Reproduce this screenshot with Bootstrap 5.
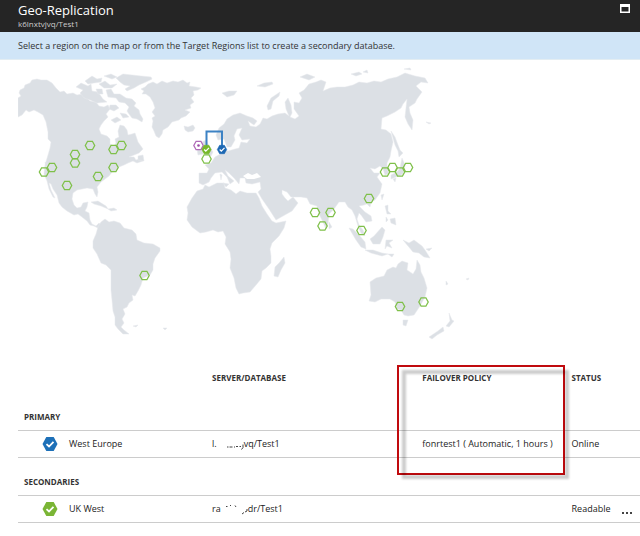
<!DOCTYPE html>
<html lang="en">
<head>
<meta charset="utf-8">
<meta name="viewport" content="width=device-width, initial-scale=1">
<title>Geo-Replication</title>
<link href="https://cdn.jsdelivr.net/npm/bootstrap@5.3.0/dist/css/bootstrap.min.css" rel="stylesheet">
<style>
  body { font-family: "Open Sans", "Noto Sans", sans-serif; font-size: 9px; line-height: 16px; color: #222; background: #fff; }
  .blade-head { background: #252525; color: #fff; height: 32px; padding: 2px 9px 0 18px; }
  .blade-head h1 { font-size: 13px; line-height: 16px; }
  .blade-head p { font-size: 8px; line-height: 12px; color: #ccc; }
  .window-btn { width: 12px; height: 12px; line-height: 0; }
  .hint { background: #d0e5f7; color: #333; height: 28px; padding-left: 18px; border-bottom: 1px solid #e3edf2; }
  .map-area { padding: 0 0 0 18px; }
  .map-area svg { width: 460px; max-width: 100%; height: auto; }
  .land { fill: #dce0e5; stroke: #e6e9ed; stroke-width: .5; stroke-linejoin: round; }
  .open-region { fill: none; stroke: #7fc04a; stroke-width: 1.3; }
  .regions { margin: 19px 0 0 18px; }
  .regions table { table-layout: fixed; color: inherit; }
  .regions th, .regions td { padding: 0; font-weight: 400; vertical-align: middle; white-space: nowrap; }
  .regions thead th, .regions .group-row th { font-size: 8px; font-weight: 700; color: #333; }
  .regions thead > tr > * { height: 25px; }
  .regions .group-row th { height: 40px; padding: 0 0 5px 6px; vertical-align: bottom; }
  .regions .group-row.later th { height: 38px; }
  .regions .region-row > * { height: 27px; border-top: 1px solid #ccc; border-bottom: 1px solid #ccc; }
  .region-name { padding-left: 24px; gap: 11px; }
  .policy-frame { left: 61%; top: 0; width: 27%; height: 110px; border: 2px solid #c00a0e; pointer-events: none; }
  .policy-frame::after { content: ""; position: absolute; inset: 3px -6px -6px 3px; border: 4px solid rgba(0,0,0,.2); filter: blur(1px); }
  .more-btn { line-height: 0; }
</style>
<script src="https://cdn.jsdelivr.net/npm/bootstrap@5.3.0/dist/js/bootstrap.bundle.min.js"></script>
</head>
<body>
<header class="blade-head d-flex justify-content-between align-items-start">
  <div>
    <h1 class="m-0 fw-normal">Geo-Replication</h1>
    <p class="m-0">k6lnxtvjvq/Test1</p>
  </div>
  <button type="button" class="window-btn btn p-0 border-0 rounded-0" aria-label="Maximize">
    <svg width="12" height="12" viewBox="0 0 12 12"><path d="M1 2h10v9H1z" fill="#fff"/><path d="M2.500 5h7v4.500h-7z" fill="#222"/></svg>
  </button>
</header>
<div class="hint d-flex align-items-center">Select a region on the map or from the Target Regions list to create a secondary database.</div>

<main>
  <section class="map-area">
    <svg class="d-block" viewBox="18 60 460 286" role="img" aria-label="World map of regions">
      <defs>
        <path id="hex" d="M-4.700 0L-2.400-4.200H2.400L4.700 0L2.400 4.200H-2.400Z"/>
        <g id="tick"><path d="M-2.300 0L-.7 1.600L2.500-1.600" fill="none" stroke="#fff" stroke-width="1.300"/></g>
      </defs>
      <g class="land">
        <path d="M18 98L21 96L19 93L20 90L24 88L25 85L30 83L32 80L37 79L41 80L47 80L52 83L56 88L60 92L64 91L67 94L73 93L77 95L82 94L87 98L90 101L96 102L99 106L104 107L108 105L110 109L106 114L108 117L104 121L101 125L99 129L101 134L107 136L110 139L110 144L114 146L116 143L115 139L119 137L118 131L120 125L124 126L127 130L128 135L132 134L135 133L138 142L143 149L139 153L134 155L129 157L134 157L136 160L142 158L143 161L137 163L133 161L128 163L124 165L119 167L116 171L112 172L109 176L105 179L101 182L97 187L98 192L97 197L95 194L93 189L87 188L82 189L77 190L73 193L72 199L74 205L77 208L81 207L83 203L88 202L87 207L85 211L89 213L90 220L92 224L96 226L99 223L101 225L98 228L94 226L90 225L87 221L82 217L78 214L74 215L67 211L62 207L59 203L57 195L53 189L51 184L49 183L51 190L55 198L53 197L49 189L47 181L44 174L45 165L48 155L50 148L51 142L48 139L48 132L46 122L43 115L38 112L34 110L29 112L26 110L22 115L18 117Z"/>
        <path d="M76 87L81 83L88 86L91 84L92 91L98 92L103 99L107 102L97 103L90 100L84 98L80 93L83 90Z"/>
        <path d="M85 81L92 76L97 79L102 78L101 82L94 83L88 84ZM99 84L105 81L110 85L117 84L112 88L104 88ZM96 89L102 89L103 94L98 94ZM106 90L111 89L114 94L120 94L126 98L132 99L136 103L134 106L139 110L140 114L143 119L142 122L137 119L132 118L129 114L127 111L129 107L125 103L119 102L116 98L108 97ZM116 78L123 74L132 75L141 76L151 77L152 79L146 82L139 85L134 88L127 91L125 89L130 86L124 85L120 82ZM104 76L111 74L117 77L112 79ZM110 105L116 105L119 108L114 111L109 109ZM111 120L117 117L121 120L115 123ZM120 113L126 114L129 117L123 118Z"/>
        <path d="M141 89L145 87L148 84L153 82L157 84L162 81L167 83L173 81L178 82L183 80L187 83L190 82L189 86L196 87L201 88L198 90L193 91L194 95L191 98L194 102L190 105L191 108L185 110L190 112L186 116L181 118L179 120L172 122L168 127L163 130L162 134L159 138L156 136L154 131L152 127L153 121L152 118L155 116L152 112L155 108L153 102L150 97L146 94L142 94L144 91Z"/>
        <path d="M184 126L188 127L193 125L195 128L193 131L188 132L185 130Z"/>
        <path d="M91 202L98 201L106 206L108 209L101 206L94 204ZM108 209L114 208L117 210L111 211ZM138 156L143 155L144 161L138 160ZM45 162L48 164L46 167Z"/>
        <path d="M98 227L101 222L105 219L109 222L114 221L120 223L124 228L132 230L136 234L137 240L144 243L153 244L160 248L160 251L155 258L153 264L153 270L150 275L143 278L141 285L138 291L135 296L132 295L133 300L129 303L127 307L123 309L125 314L122 319L124 323L121 327L124 330L129 334L123 334L118 329L115 325L115 317L113 311L112 300L111 290L111 270L106 265L101 263L97 254L93 248L93 241L96 234Z"/>
        <path d="M133 326L138 325L136 327ZM163 328L167 328L165 330Z"/>
        <path d="M205 185L209 187L217 183L224 183L225 188L231 190L236 194L240 191L247 193L256 193L259 198L262 206L267 214L272 221L276 223L286 221L284 228L279 236L272 243L270 249L271 256L271 263L266 268L262 271L261 279L256 285L250 292L243 293L239 294L236 288L234 278L230 268L231 259L230 252L225 244L226 237L223 231L218 232L213 230L206 232L200 233L192 227L187 220L188 213L187 207L192 198L197 191L203 189Z"/>
        <path d="M284 257L285 263L281 270L278 277L274 276L275 267L279 263Z"/>
        <path d="M199 173L207 173L209 169L205 165L211 163L215 157L222 153L224 149L228 151L235 149L239 148L241 142L247 143L250 139L242 140L239 135L242 128L237 129L234 136L235 140L231 147L227 147L224 139L218 140L216 135L219 128L224 124L227 119L233 115L240 113L247 116L253 118L257 121L254 125L248 121L250 126L256 127L260 124L263 118L267 119L272 116L278 114L285 113L289 116L286 109L285 102L288 98L291 105L292 113L290 117L295 119L299 116L294 109L294 102L299 103L302 98L299 93L304 90L309 84L316 82L321 80L326 82L323 91L330 88L337 87L345 87L353 85L359 82L367 83L374 81L381 82L388 79L397 77L405 73L415 76L425 78L428 83L421 82L416 86L422 92L417 99L415 103L409 107L410 113L413 120L412 130L408 124L405 117L406 108L407 99L403 104L401 108L395 112L387 116L382 118L381 129L386 130L391 134L393 142L391 151L390 157L387 163L387 168L389 174L385 175L383 169L380 166L375 169L370 168L374 173L380 173L377 177L382 184L380 193L375 200L369 203L364 205L359 206L365 212L371 216L372 221L366 222L361 215L359 213L357 219L359 225L363 230L365 236L361 233L358 226L355 216L352 210L348 207L345 202L339 202L334 209L329 214L328 224L326 229L322 220L319 214L317 206L310 204L307 198L301 197L291 197L287 192L282 190L282 194L285 198L288 201L293 197L298 203L292 211L283 216L276 220L269 209L262 199L258 192L261 189L260 182L252 184L246 183L245 178L240 178L239 184L234 178L229 173L225 170L228 176L234 181L230 184L227 177L222 172L215 173L211 178L209 182L203 185L199 183Z"/>
      </g>
      <path d="M243 176L248 173L252 175L257 173L261 177L254 179L247 179Z" fill="#fff"/>
      <g class="land">
        <path d="M220 174L222 175L221 180ZM223 183L229 184L226 187Z"/>
        <path d="M202 142L206 140L209 146L213 152L211 156L205 156L206 151ZM197 149L203 148L203 154L198 155Z"/>
        <path d="M222 93L229 91L237 91L234 95L227 97ZM257 86L264 83L272 82L273 84L265 87ZM267 106L271 98L280 92L279 96L273 101L271 109L268 110ZM300 77L307 74L315 77L309 80ZM351 74L359 72L362 74L356 76ZM363 72L367 70L368 73ZM404 69L410 68L411 70ZM426 122L431 123L429 124Z"/>
        <path d="M391 131L395 137L398 145L400 150L403 153L399 157L398 151L395 145ZM402 158L405 165L403 174L396 177L391 179L391 175L397 172L400 168ZM393 179L396 178L395 182Z"/>
        <path d="M381 195L384 194L382 200ZM367 204L371 203L370 207ZM385 206L388 205L388 211L391 214L387 214ZM390 219L395 218L396 225L391 223ZM386 217L388 220L386 222Z"/>
        <path d="M349 228L353 229L359 235L365 242L366 249L361 247L356 240ZM365 250L373 250L382 253L388 254L382 256L371 253ZM382 227L385 230L383 237L380 244L373 244L370 239L374 236ZM386 240L393 240L389 243L392 248L387 246L385 249ZM403 240L409 243L414 240L422 246L425 250L430 258L424 257L419 253L413 252L408 246ZM388 254L394 254L392 257ZM426 249L432 248L429 251ZM329 222L332 227L329 229Z"/>
        <path d="M370 282L376 278L384 276L387 270L393 267L396 268L398 264L402 261L408 263L407 270L413 274L416 269L417 260L420 265L421 272L424 278L427 288L425 297L420 306L414 315L408 316L404 315L401 310L397 309L395 302L390 299L381 299L375 302L369 301L371 295Z"/>
        <path d="M403 320L408 320L406 326L403 325ZM449 313L452 320L454 321L449 327L446 326L450 321ZM443 327L444 331L437 335L432 339L429 337L438 331ZM446 281L448 284L446 285ZM466 279L469 278L468 280Z"/>
      </g>
      <g class="open-region">
        <use href="#hex" x="90" y="145.500"/><use href="#hex" x="75" y="154.500"/><use href="#hex" x="75" y="163"/>
        <use href="#hex" x="52" y="167.500"/><use href="#hex" x="44" y="172"/><use href="#hex" x="67" y="185.500"/>
        <use href="#hex" x="98" y="176.500"/><use href="#hex" x="113.500" y="167.500"/><use href="#hex" x="113.500" y="149.500"/>
        <use href="#hex" x="121.500" y="145.500"/><use href="#hex" x="144.500" y="275.500"/><use href="#hex" x="206.500" y="159" fill="#fff"/>
        <use href="#hex" x="385" y="172"/><use href="#hex" x="392.500" y="167.500"/><use href="#hex" x="400" y="172"/>
        <use href="#hex" x="408" y="167.500"/><use href="#hex" x="369" y="198.500"/><use href="#hex" x="361.500" y="230.500"/>
        <use href="#hex" x="315" y="212.500"/><use href="#hex" x="330.500" y="212.500"/><use href="#hex" x="322.500" y="226"/>
        <use href="#hex" x="400" y="306.500"/><use href="#hex" x="423.500" y="302"/>
      </g>
      <path d="M206.500 147V131.500H222V147" fill="none" stroke="#3c82c4" stroke-width="2"/>
      <use href="#hex" x="198.500" y="145.500" fill="#fff" stroke="#b06bb8" stroke-width="1.300"/>
      <circle cx="198.500" cy="145.500" r="1.300" fill="#9c4ba6"/>
      <use href="#hex" x="206.500" y="149.500" fill="#76b82a" stroke="#76b82a" stroke-width=".6"/><use href="#tick" x="206.500" y="149.500"/>
      <use href="#hex" x="222" y="149.500" fill="#1d68b4" stroke="#1d68b4" stroke-width=".6"/><use href="#tick" x="222" y="149.500"/>
    </svg>
  </section>

  <section class="regions position-relative">
    <table class="w-100">
      <colgroup><col style="width:31.2%"><col style="width:33.8%"><col style="width:24%"><col style="width:11%"></colgroup>
      <thead>
        <tr><td></td><th scope="col">SERVER/DATABASE</th><th scope="col">FAILOVER POLICY</th><th scope="col">STATUS</th></tr>
      </thead>
      <tbody>
        <tr class="group-row"><th colspan="4" scope="rowgroup">PRIMARY</th></tr>
        <tr class="region-row">
          <th scope="row"><div class="region-name d-flex align-items-center">
            <svg width="16" height="16" viewBox="0 0 16 16"><path d="M.5 8L4.300 1h7.400L15.500 8L11.700 15H4.300Z" fill="#1d70b8"/><path d="M4.500 8.200L7 10.500L11.500 5.800" fill="none" stroke="#fff" stroke-width="1.800"/></svg>West Europe</div></th>
          <td><div class="d-flex align-items-center">l.<svg width="27" height="12" viewBox="0 0 27 12"><path d="M10 9h1.500M12.500 9h3M17 9h1M19 8.500h2M22.500 8.500h1.500M26 6.500v3l-1.500 2" fill="none" stroke="#444"/></svg>vq/Test1</div></td>
          <td>fonrtest1 ( Automatic, 1 hours )</td>
          <td>Online</td>
        </tr>
      </tbody>
      <tbody>
        <tr class="group-row later"><th colspan="4" scope="rowgroup">SECONDARIES</th></tr>
        <tr class="region-row">
          <th scope="row"><div class="region-name d-flex align-items-center">
            <svg width="16" height="16" viewBox="0 0 16 16"><path d="M.5 8L4.300 1h7.400L15.500 8L11.700 15H4.300Z" fill="#7ab535"/><path d="M4.500 8.200L7 10.500L11.500 5.800" fill="none" stroke="#fff" stroke-width="1.800"/></svg>UK West</div></th>
          <td><div class="d-flex align-items-center">ra<svg width="27" height="12" viewBox="0 0 27 12"><path d="M5 3.500h1.500M9 2.500h1M14 2.500l1 1.500M21 11l2-1.500M24 9l2-1V6" fill="none" stroke="#444"/></svg>dr/Test1</div></td>
          <td></td>
          <td><div class="d-flex align-items-center justify-content-between pe-2">Readable<button type="button" class="more-btn btn p-0 border-0" aria-label="More"><svg width="10" height="12" viewBox="0 0 10 12" fill="#444"><path d="M0 9h2v2H0zM4 9h2v2H4zM8 9h2v2H8z"/></svg></button></div></td>
        </tr>
      </tbody>
    </table>
    <div class="policy-frame position-absolute"></div>
  </section>
</main>
</body>
</html>
